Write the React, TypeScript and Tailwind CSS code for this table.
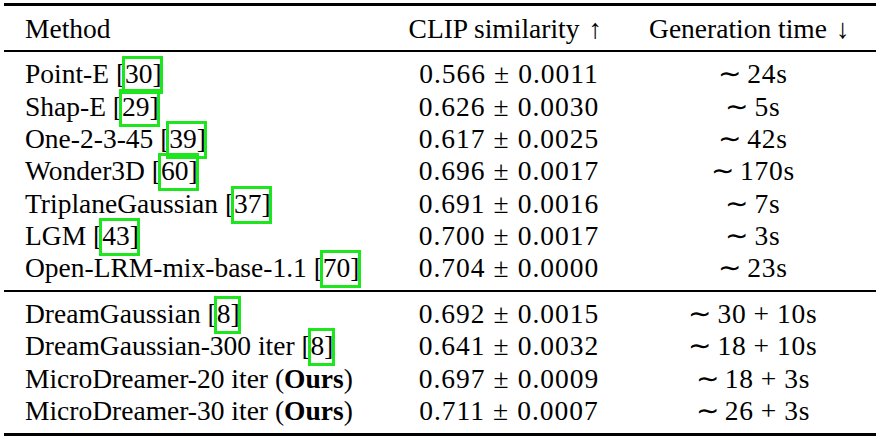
import { ReactNode } from "react";

// citation link with the green pdf-style box around it
const Cite = ({ n }: { n: string }) => (
  <>
    {"["}
    <span className="relative">
      {n}]
      <span className="absolute -left-[3px] -right-[1px] -top-[2px] -bottom-[5px] border-[3px] border-[#1ee61e]" />
    </span>
  </>
);

type Row = { name: ReactNode; mean: string; std: string; time: ReactNode };

const Tilde = () => <span className="inline-block w-[22px] mr-[7px] text-center">∼</span>;

const Sum = ({ a, b }: { a: string; b: string }) => (
  <>
    <Tilde />
    {a}
    <span className="mx-[7px]">+</span>
    {b}
  </>
);

const top: Row[] = [
  { name: <>Point-E <Cite n="30" /></>, mean: "0.566", std: "0.0011", time: <><Tilde />24s</> },
  { name: <>Shap-E <Cite n="29" /></>, mean: "0.626", std: "0.0030", time: <><Tilde />5s</> },
  { name: <>One-2-3-45 <Cite n="39" /></>, mean: "0.617", std: "0.0025", time: <><Tilde />42s</> },
  { name: <>Wonder3D <Cite n="60" /></>, mean: "0.696", std: "0.0017", time: <><Tilde />170s</> },
  { name: <>TriplaneGaussian <Cite n="37" /></>, mean: "0.691", std: "0.0016", time: <><Tilde />7s</> },
  { name: <>LGM <Cite n="43" /></>, mean: "0.700", std: "0.0017", time: <><Tilde />3s</> },
  { name: <>Open-LRM-mix-base-1.1 <Cite n="70" /></>, mean: "0.704", std: "0.0000", time: <><Tilde />23s</> },
];

const bottom: Row[] = [
  { name: <>DreamGaussian <Cite n="8" /></>, mean: "0.692", std: "0.0015", time: <Sum a="30" b="10s" /> },
  { name: <>DreamGaussian-300 iter <Cite n="8" /></>, mean: "0.641", std: "0.0032", time: <Sum a="18" b="10s" /> },
  { name: <>MicroDreamer-20 iter (<b>Ours</b>)</>, mean: "0.697", std: "0.0009", time: <Sum a="18" b="3s" /> },
  { name: <>MicroDreamer-30 iter (<b>Ours</b>)</>, mean: "0.711", std: "0.0007", time: <Sum a="26" b="3s" /> },
];

const cols = "grid grid-cols-[384px_242px_246px] h-[32.3px] leading-[29px]";

const TableRow = ({ row }: { row: Row }) => (
  <div className={cols}>
    <div className="pl-[21px] whitespace-nowrap">{row.name}</div>
    <div className="text-center whitespace-nowrap tracking-[1px]">
      {row.mean}
      <span className="mx-[8px]">±</span>
      {row.std}
    </div>
    <div className="text-center whitespace-nowrap tracking-[0.8px]">{row.time}</div>
  </div>
);

export default function App() {
  return (
    <div className="w-[881px] h-[436px] bg-white pt-[3px] pl-[4px] text-[27.5px] text-black font-['Liberation_Serif','Times_New_Roman',serif]">
      <div className="w-[872px]">
        <div className="h-[3px] bg-black" />
        <div className="pt-[7.5px] pb-[4.6px]">
          <div className={cols}>
            <div className="pl-[21px]">Method</div>
            <div className="text-center">
              CLIP similarity<span className="inline-block w-[28px] ml-[2px] text-center">↑</span>
            </div>
            <div className="text-center">
              Generation time<span className="inline-block w-[28px] ml-[2px] text-center">↓</span>
            </div>
          </div>
        </div>
        <div className="h-[1.5px] bg-black" />
        <div className="pt-[7.5px] pb-[4.6px]">
          {top.map((r, i) => (
            <TableRow key={i} row={r} />
          ))}
        </div>
        <div className="h-[1.5px] bg-black" />
        <div className="pt-[7.5px] pb-[4.6px]">
          {bottom.map((r, i) => (
            <TableRow key={i} row={r} />
          ))}
        </div>
        <div className="h-[3px] bg-black" />
      </div>
    </div>
  );
}
